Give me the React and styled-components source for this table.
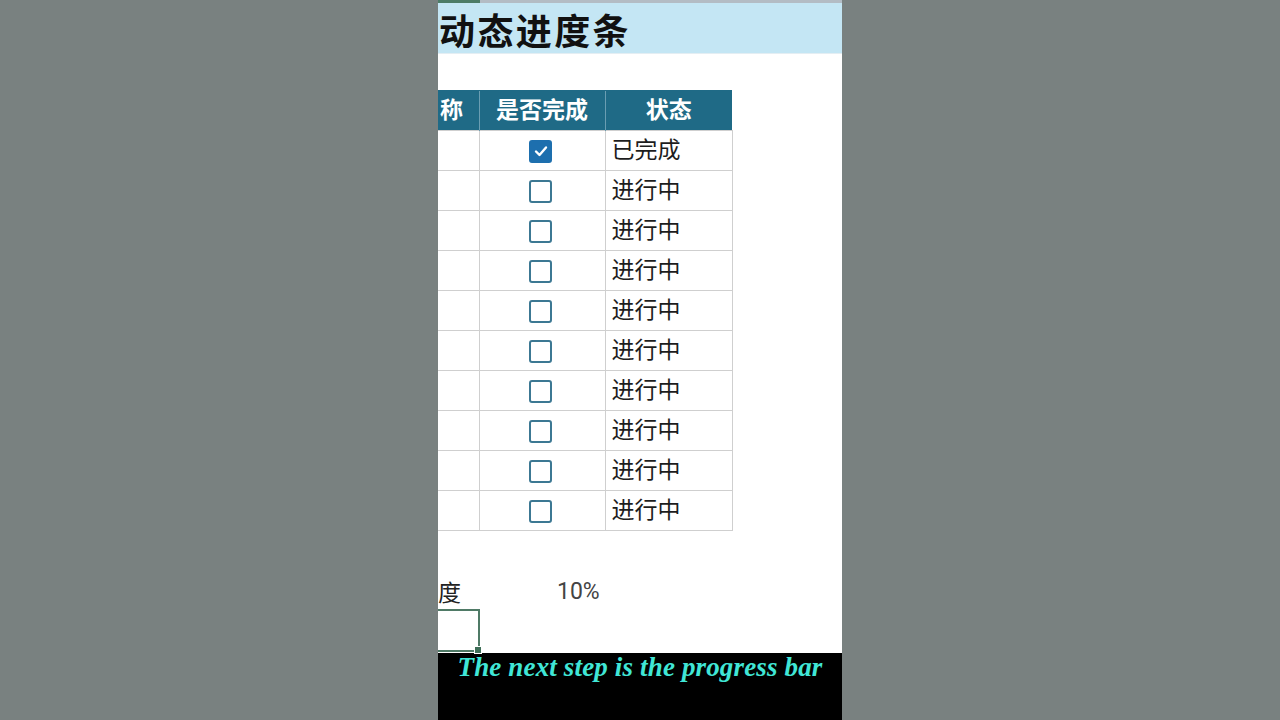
import React from "react";
import styled, { createGlobalStyle } from "styled-components";

const Global = createGlobalStyle`
  html, body { margin: 0; padding: 0; }
  body {
    background: #798180;
    font-family: "Noto Sans CJK SC", "Noto Sans", sans-serif;
  }
`;

const Stage = styled.div`
  width: 1280px;
  height: 720px;
  display: flex;
  justify-content: center;
  background: #798180;
`;

const Column = styled.div`
  width: 404px;
  height: 720px;
  background: #ffffff;
  display: flex;
  flex-direction: column;
  overflow: hidden;
`;

const TopStrip = styled.div`
  flex: none;
  height: 3px;
  background: #b3bcc4;
  display: flex;
`;

const StripTab = styled.div`
  width: 42px;
  background: #4d7c66;
`;

const TitleBar = styled.div`
  flex: none;
  height: 51px;
  background: #c4e6f4;
  display: flex;
  align-items: center;
  padding-left: 1px;
  font-size: 36px;
  font-weight: 700;
  letter-spacing: 2.4px;
  color: #111;
  border-bottom: 1px solid #e4eef3;
  line-height: 1;
  padding-top: 2px;
  box-sizing: border-box;
`;

const Content = styled.div`
  flex: 1;
  min-height: 0;
  padding-top: 36px;
  display: flex;
  flex-direction: column;
`;

const Table = styled.table`
  flex: none;
  border-collapse: collapse;
  width: 294px;
  table-layout: fixed;
  font-size: 23px;
  line-height: 1;
`;

const HeadCell = styled.th`
  height: 35px;
  padding: 0 0 4px 0;
  background: #1f6a86;
  color: #ffffff;
  font-weight: 700;
  text-align: ${(p) => (p.$left ? "left" : "center")};
  padding-left: ${(p) => (p.$left ? "2px" : "0")};
  border-left: ${(p) => (p.$left ? "none" : "1px solid #6a9db2")};
  border-top: 1px solid #1f6a86;
`;

const Cell = styled.td`
  height: 35px;
  padding: 0 0 4px 0;
  border: 1px solid #cfcfcf;
  border-left: ${(p) => (p.$first ? "none" : "1px solid #cfcfcf")};
  color: #1d1d1d;
  text-align: ${(p) => (p.$center ? "center" : "left")};
  padding-left: ${(p) => (p.$center ? "0" : "6px")};
  vertical-align: middle;
`;

const Box = styled.span`
  display: inline-flex;
  align-items: center;
  justify-content: center;
  width: 23px;
  height: 23px;
  box-sizing: border-box;
  border-radius: 3px;
  border: 2px solid ${(p) => (p.$checked ? "#1d6fae" : "#3c7893")};
  background: ${(p) => (p.$checked ? "#1d6fae" : "#ffffff")};
  vertical-align: middle;
  margin-top: 4px;
  margin-right: 3px;
`;

const ProgressRow = styled.div`
  flex: none;
  margin-top: 48px;
  height: 24px;
  display: flex;
  align-items: center;
  font-size: 23px;
  color: #222;
  line-height: 1;
`;

const Label = styled.span`
  width: 119px;
`;

const Percent = styled.span`
  font-family: "Roboto", "Noto Sans", sans-serif;
  font-size: 23px;
  color: #444;
`;

const SelectedCell = styled.div`
  flex: none;
  position: relative;
  margin-top: 6px;
  width: 42px;
  height: 43px;
  box-sizing: border-box;
  border: 2px solid #4f7a66;
  border-left: none;
`;

const Handle = styled.span`
  position: absolute;
  right: -4px;
  bottom: -4px;
  width: 6px;
  height: 6px;
  background: #3f6f58;
  border: 1px solid #fff;
`;

const Subtitle = styled.div`
  flex: none;
  height: 67px;
  background: #000;
  display: flex;
  justify-content: center;
  font-family: "Liberation Serif", "DejaVu Serif", serif;
  font-style: italic;
  font-weight: 700;
  font-size: 27px;
  letter-spacing: 0.15px;
  color: #40e6d6;
  line-height: 26px;
  white-space: nowrap;
  padding-top: 1px;
  box-sizing: border-box;
`;

const Check = () => (
  <svg width="16" height="16" viewBox="0 0 16 16" fill="none">
    <path d="M3 8.5 L6.5 12 L13 4.5" stroke="#fff" strokeWidth="2.4" strokeLinecap="round" strokeLinejoin="round" />
  </svg>
);

const rows = Array.from({ length: 10 }, (_, i) => ({ done: i === 0 }));

export default function App() {
  return (
    <>
      <Global />
      <Stage>
        <Column>
          <TopStrip>
            <StripTab />
          </TopStrip>
          <TitleBar>动态进度条</TitleBar>
          <Content>
            <Table>
              <colgroup>
                <col style={{ width: "41px" }} />
                <col style={{ width: "126px" }} />
                <col style={{ width: "127px" }} />
              </colgroup>
              <thead>
                <tr>
                  <HeadCell $left>称</HeadCell>
                  <HeadCell>是否完成</HeadCell>
                  <HeadCell>状态</HeadCell>
                </tr>
              </thead>
              <tbody>
                {rows.map((r, i) => (
                  <tr key={i}>
                    <Cell $first />
                    <Cell $center>
                      <Box $checked={r.done}>{r.done && <Check />}</Box>
                    </Cell>
                    <Cell>{r.done ? "已完成" : "进行中"}</Cell>
                  </tr>
                ))}
              </tbody>
            </Table>
            <ProgressRow>
              <Label>度</Label>
              <Percent>10%</Percent>
            </ProgressRow>
            <SelectedCell>
              <Handle />
            </SelectedCell>
          </Content>
          <Subtitle>The next step is the progress bar</Subtitle>
        </Column>
      </Stage>
    </>
  );
}
